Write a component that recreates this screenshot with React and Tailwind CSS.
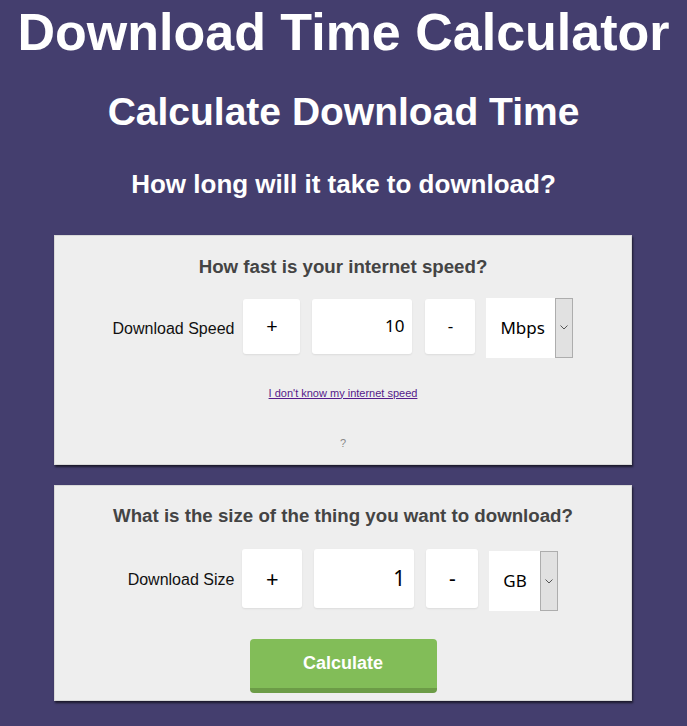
import React from "react";

function Chevron() {
  return (
    <svg width="8" height="5" viewBox="0 0 8 5" className="block">
      <polyline points="0.5,0.5 4,4 7.5,0.5" fill="none" stroke="#555" strokeWidth="1" />
    </svg>
  );
}

function Box({ w, h, className = "", children }) {
  return (
    <div
      className={`flex items-center justify-center bg-white rounded-[3px] shadow-[0_1px_2px_rgba(0,0,0,0.08)] ${w} ${h} ${className}`}
    >
      {children}
    </div>
  );
}

function UnitSelect({ label, w, className = "" }) {
  return (
    <div className={`flex h-[60px] bg-white ${w} ${className}`}>
      <div className="flex-1 flex items-center pl-[14px] text-[17px] text-black font-['Noto_Sans',sans-serif]">
        {label}
      </div>
      <div className="w-[18px] flex items-center justify-center bg-[#e1e1e1] border border-[#adadad]">
        <Chevron />
      </div>
    </div>
  );
}

export default function App() {
  return (
    <div className="min-h-[726px] bg-[#443e6e] font-['Liberation_Sans',Arial,sans-serif] pb-[26px]">
      <h1 className="text-center text-white font-bold text-[52px] leading-[60px] pt-[2px]">
        Download Time Calculator
      </h1>
      <h2 className="text-center text-white font-bold text-[39px] leading-[45px] mt-[27px]">
        Calculate Download Time
      </h2>
      <h3 className="text-center text-white font-bold text-[26px] leading-[30px] mt-[35px]">
        How long will it take to download?
      </h3>

      {/* speed card */}
      <section className="w-[578px] ml-[54px] mt-[36px] bg-[#eeeeee] border border-[#d8d8d8] shadow-[1px_2px_2px_rgba(0,0,0,0.6)] pt-[20px] pb-[14px] flex flex-col items-center">
        <h4 className="text-[18.7px] leading-[21.5px] font-bold text-[#444444]">
          How fast is your internet speed?
        </h4>
        <div className="flex items-start mt-[20px] h-[60px]">
          <span className="self-center text-[16px] text-[#111] mr-[9px] mt-[2px]">Download Speed</span>
          <Box w="w-[57px]" h="h-[55px]" className="mt-[1px] text-[20px] font-['Noto_Sans',sans-serif]">+</Box>
          <Box w="w-[100px]" h="h-[55px]" className="mt-[1px] ml-[12px] !justify-end pr-[8px] text-[17px] font-['Noto_Sans',sans-serif]">10</Box>
          <Box w="w-[50px]" h="h-[55px]" className="mt-[1px] ml-[13px] text-[17px] font-['Noto_Sans',sans-serif]">-</Box>
          <UnitSelect label="Mbps" w="w-[87px]" className="ml-[11px]" />
        </div>
        <a href="#" className="mt-[29px] text-[11px] leading-[13px] text-[#551a8b] underline">
          I don't know my internet speed
        </a>
        <span className="mt-[37px] text-[11px] leading-[13px] text-[#888888]">?</span>
      </section>

      {/* size card */}
      <section className="w-[578px] ml-[54px] mt-[20px] bg-[#eeeeee] border border-[#d8d8d8] shadow-[1px_2px_2px_rgba(0,0,0,0.6)] pt-[19px] pb-[7px] flex flex-col items-center">
        <h4 className="text-[18.7px] leading-[21.5px] font-bold text-[#444444]">
          What is the size of the thing you want to download?
        </h4>
        <div className="flex items-start mt-[23px] h-[62px]">
          <span className="self-center text-[16px] text-[#111] mr-[8px]">Download Size</span>
          <Box w="w-[60px]" h="h-[59px]" className="text-[22px] font-['Noto_Sans',sans-serif]">+</Box>
          <Box w="w-[100px]" h="h-[59px]" className="ml-[12px] !justify-end pr-[9px] text-[21px] font-['Noto_Sans',sans-serif]">1</Box>
          <Box w="w-[52px]" h="h-[59px]" className="ml-[12px] text-[21px] font-['Noto_Sans',sans-serif]">-</Box>
          <UnitSelect label="GB" w="w-[69px]" className="ml-[11px] mt-[2px]" />
        </div>
        <button className="mt-[28px] w-[187px] h-[54px] rounded-[4px] bg-[#82bd58] border-b-[5px] border-[#6c9c47] text-white font-bold text-[18px]">
          Calculate
        </button>
      </section>
    </div>
  );
}
